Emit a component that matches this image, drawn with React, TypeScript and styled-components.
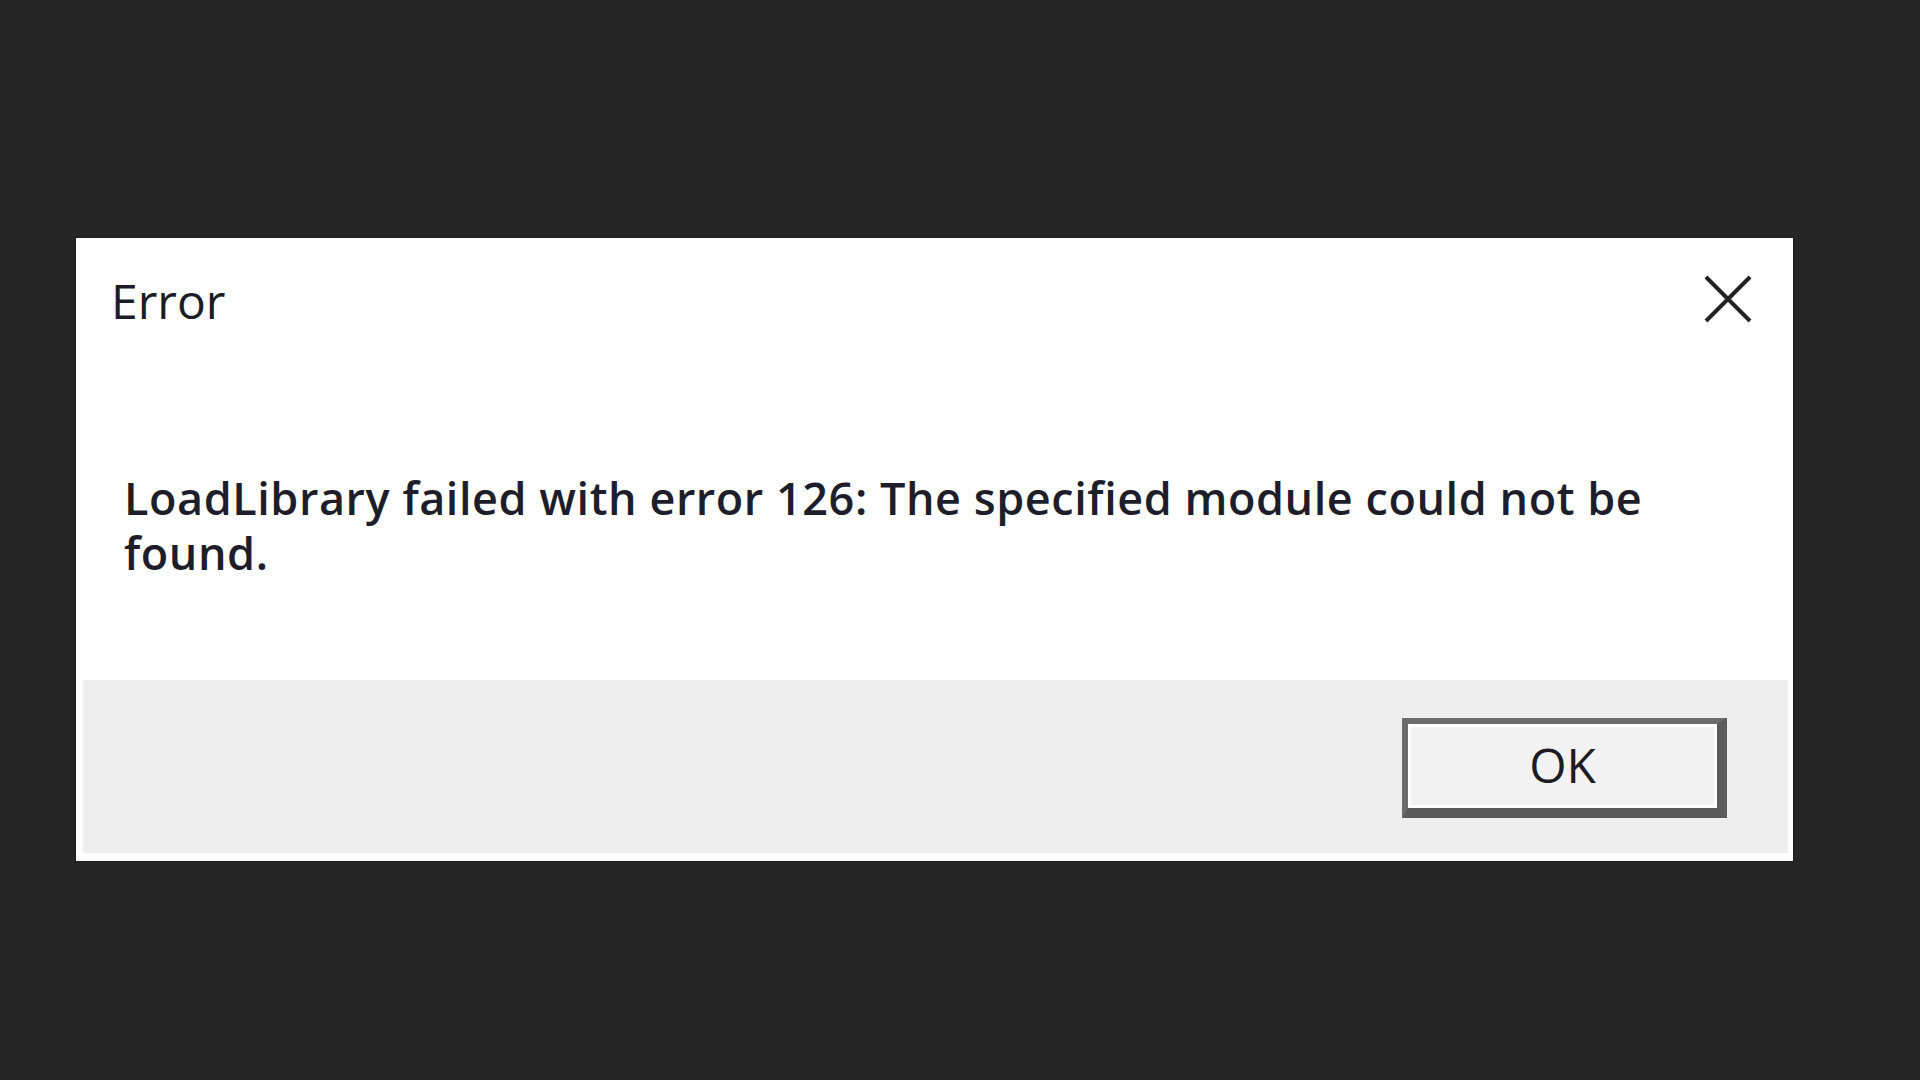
import React from "react";
import styled, { createGlobalStyle } from "styled-components";

const Global = createGlobalStyle`
  html, body {
    margin: 0;
    padding: 0;
    background: #262626;
  }
  body {
    font-family: "Open Sans", "Noto Sans", "Liberation Sans", sans-serif;
  }
`;

const Page = styled.div`
  width: 1920px;
  height: 1080px;
  box-sizing: border-box;
  padding: 238px 0 0 76px;
  background: #262626;
  overflow: hidden;
`;

const Dialog = styled.div`
  width: 1717px;
  height: 623px;
  box-sizing: border-box;
  background: #ffffff;
  display: flex;
  flex-direction: column;
  padding: 0 5px 8px 7px;
  box-shadow: 0 0 2px rgba(0, 0, 0, 0.6);
`;

const Content = styled.div`
  height: 442px;
  box-sizing: border-box;
  display: flex;
  flex-direction: column;
  padding: 31px 0 0 0;
`;

const TitleRow = styled.div`
  display: flex;
  align-items: flex-start;
  justify-content: space-between;
  padding: 0 36px 0 28px;
`;

const Title = styled.div`
  font-size: 48px;
  line-height: 64px;
  font-weight: 400;
  color: #1c1c24;
`;

const CloseButton = styled.div`
  width: 48px;
  height: 48px;
  margin-top: 6px;
  display: flex;
  align-items: center;
  justify-content: center;
`;

const Message = styled.div`
  margin: 137px 0 0 41px;
  width: 1580px;
  font-size: 45px;
  line-height: 55px;
  font-weight: 600;
  letter-spacing: 0.55px;
  color: #1e1e2a;
`;

const Footer = styled.div`
  flex: 1;
  background: #eeeeee;
  display: flex;
  justify-content: flex-end;
  align-items: flex-start;
  padding: 38px 61px 0 0;
`;

const OkButton = styled.div`
  width: 325px;
  height: 100px;
  box-sizing: border-box;
  border-style: solid;
  border-color: #6c6c6c #5c5c5c #5a5a5a #6c6c6c;
  border-width: 6px 10px 10px 6px;
  background: #f2f2f2;
  box-shadow: inset 3px 3px 0 #ffffff, inset -3px -3px 0 #ffffff;
  display: flex;
  align-items: center;
  justify-content: center;
  font-size: 48px;
  line-height: 1;
  color: #1c1c24;
  padding-bottom: 2px;
`;

export default function App() {
  return (
    <>
      <Global />
      <Page>
        <Dialog>
          <Content>
            <TitleRow>
              <Title>Error</Title>
              <CloseButton>
                <svg width="48" height="48" viewBox="0 0 48 48">
                  <path d="M2 2 L46 46 M46 2 L2 46" stroke="#222" strokeWidth="4" fill="none" />
                </svg>
              </CloseButton>
            </TitleRow>
            <Message>
              LoadLibrary failed with error 126: The specified module could not be found.
            </Message>
          </Content>
          <Footer>
            <OkButton>OK</OkButton>
          </Footer>
        </Dialog>
      </Page>
    </>
  );
}
